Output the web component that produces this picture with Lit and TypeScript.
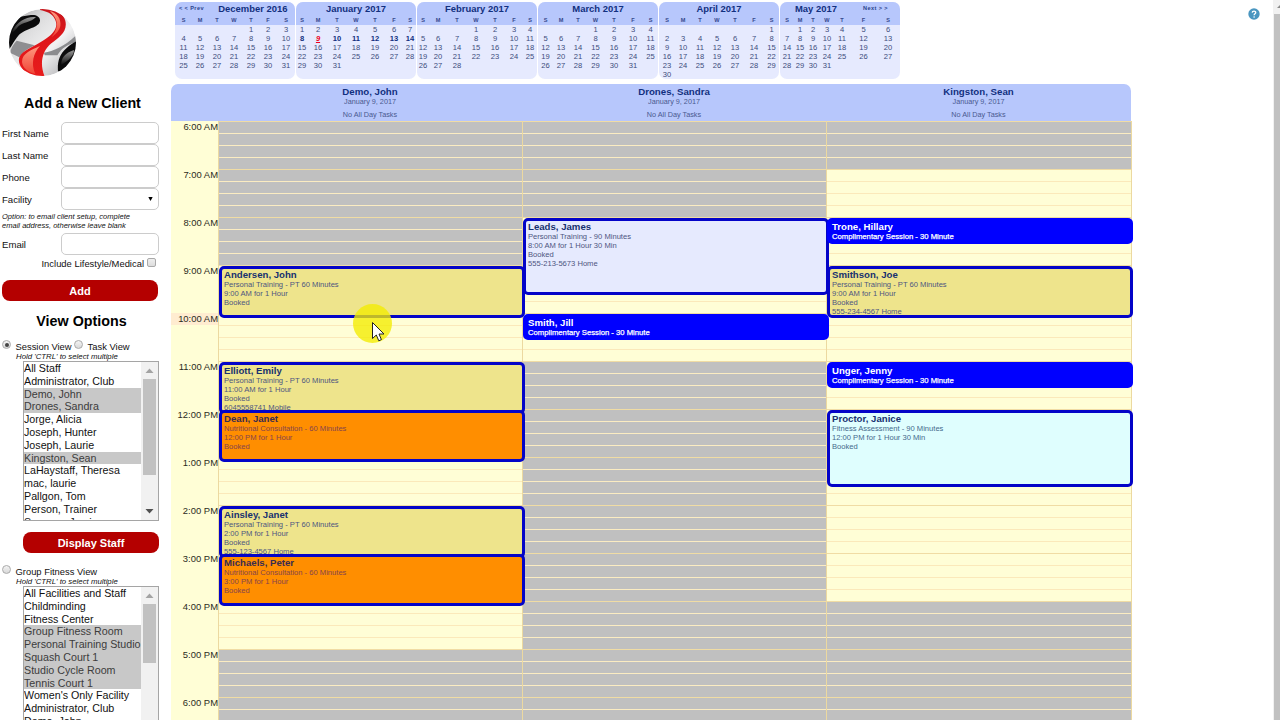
import { LitElement, html, css, svg, nothing } from "lit";
import { customElement, property } from "lit/decorators.js";
import { classMap } from "lit/directives/class-map.js";

interface Month {
  title: string;
  first: number;
  days: number;
  cols: number[];
  week?: [number, number];
  today?: number;
  prev?: boolean;
  next?: boolean;
}

interface Session {
  name: string;
  lines: string[];
  start: number;
  minutes: number;
  kind: string;
}

interface Staff {
  name: string;
  open: [number, number][];
  sessions: Session[];
}

const MONTHS: Month[] = [
  { title: "December 2016", first: 4, days: 31, cols: [17, 16, 18, 16, 18, 16, 20], prev: true },
  { title: "January 2017", first: 0, days: 31, cols: [12, 20, 18, 20, 18, 20, 12], week: [8, 14], today: 9 },
  { title: "February 2017", first: 3, days: 28, cols: [12, 18, 20, 18, 20, 18, 14] },
  { title: "March 2017", first: 3, days: 31, cols: [15, 16, 18, 17, 20, 18, 17] },
  { title: "April 2017", first: 6, days: 30, cols: [16, 16, 18, 16, 20, 18, 17] },
  { title: "May 2017", first: 1, days: 31, cols: [14, 12, 14, 14, 16, 27, 22], next: true },
];

const PT60 = "Personal Training - PT 60 Minutes";
const NUTRITION = "Nutritional Consultation - 60 Minutes";
const COMP = "Complimentary Session - 30 Minute";

const STAFF: Staff[] = [
  {
    name: "Demo, John",
    open: [[9, 17]],
    sessions: [
      { name: "Andersen, John", lines: [PT60, "9:00 AM for 1 Hour", "Booked"], start: 9, minutes: 60, kind: "pt" },
      { name: "Elliott, Emily", lines: [PT60, "11:00 AM for 1 Hour", "Booked", "6045558741 Mobile"], start: 11, minutes: 60, kind: "pt" },
      { name: "Dean, Janet", lines: [NUTRITION, "12:00 PM for 1 Hour", "Booked"], start: 12, minutes: 60, kind: "nutrition" },
      { name: "Ainsley, Janet", lines: [PT60, "2:00 PM for 1 Hour", "Booked", "555-123-4567 Home"], start: 14, minutes: 60, kind: "pt" },
      { name: "Michaels, Peter", lines: [NUTRITION, "3:00 PM for 1 Hour", "Booked"], start: 15, minutes: 60, kind: "nutrition" },
    ],
  },
  {
    name: "Drones, Sandra",
    open: [[8, 11]],
    sessions: [
      { name: "Leads, James", lines: ["Personal Training - 90 Minutes", "8:00 AM for 1 Hour 30 Min", "Booked", "555-213-5673 Home"], start: 8, minutes: 90, kind: "long" },
      { name: "Smith, Jill", lines: [COMP], start: 10, minutes: 30, kind: "comp" },
    ],
  },
  {
    name: "Kingston, Sean",
    open: [[7, 16]],
    sessions: [
      { name: "Trone, Hillary", lines: [COMP], start: 8, minutes: 30, kind: "comp" },
      { name: "Smithson, Joe", lines: [PT60, "9:00 AM for 1 Hour", "Booked", "555-234-4567 Home"], start: 9, minutes: 60, kind: "pt" },
      { name: "Unger, Jenny", lines: [COMP], start: 11, minutes: 30, kind: "comp" },
      { name: "Proctor, Janice", lines: ["Fitness Assessment - 90 Minutes", "12:00 PM for 1 Hour 30 Min", "Booked"], start: 12, minutes: 90, kind: "fitness" },
    ],
  },
];

const FIRST_HOUR = 6;
const HOURS = 13;
const HOUR_PX = 48;

const hourLabel = (h: number) => `${h > 12 ? h - 12 : h}:00 ${h < 12 ? "AM" : "PM"}`;

@customElement("month-card")
class MonthCard extends LitElement {
  @property({ attribute: false }) month!: Month;

  static styles = css`
    :host { display: block; width: 120px; height: 77px; overflow: hidden; border-radius: 7px; background: #e6eafe; color: #3c4c7c; }
    .head { height: 23px; background: #b7c7fc; }
    .title { display: flex; height: 13px; line-height: 13px; justify-content: center; font-size: 9.45px; font-weight: bold; color: #12307f; white-space: nowrap; }
    .title.prev { justify-content: space-between; padding: 0 7.5px 0 4px; }
    .title.next { justify-content: space-between; padding: 0 12px 0 15px; }
    .nav { font-size: 5.6px; letter-spacing: 0.4px; color: #2c448c; }
    .row { display: grid; text-align: center; }
    .week { font-size: 5.6px; font-weight: bold; line-height: 10px; color: #36498c; }
    .dates { font-size: 7.6px; line-height: 9px; grid-auto-rows: 9px; }
    .bold { font-weight: bold; color: #12307f; }
    .today { font-weight: bold; font-style: italic; color: #f00020; text-decoration: underline; }
  `;

  render() {
    const m = this.month;
    const columns = m.cols.map((c) => `${c}px`).join(" ");
    return html`
      <div class="head">
        <div class=${classMap({ title: true, prev: !!m.prev, next: !!m.next })}>
          ${m.prev ? html`<span class="nav">&lt; &lt; Prev</span>` : nothing}
          <span>${m.title}</span>
          ${m.next ? html`<span class="nav">Next &gt; &gt;</span>` : nothing}
        </div>
        <div class="row week" style="grid-template-columns:${columns}">
          ${[..."SMTWTFS"].map((d) => html`<span>${d}</span>`)}
        </div>
      </div>
      <div class="row dates" style="grid-template-columns:${columns}">
        ${Array.from({ length: m.first }, () => html`<span></span>`)}
        ${Array.from({ length: m.days }, (_, i) => i + 1).map(
          (d) => html`<span class=${classMap({
            bold: !!m.week && d >= m.week[0] && d <= m.week[1] && d !== m.today,
            today: d === m.today,
          })}>${d}</span>`
        )}
      </div>
    `;
  }
}

@customElement("list-box")
class ListBox extends LitElement {
  @property({ attribute: false }) items: string[] = [];
  @property({ attribute: false }) selected: string[] = [];
  @property({ type: Number }) thumb = 96;

  static styles = css`
    :host { display: flex; box-sizing: border-box; width: 136px; height: 160px; border: 1px solid #a5a5a5; background: #fff; overflow: hidden; }
    .options { width: 117px; overflow: hidden; }
    .option { height: 12.8px; line-height: 12.5px; font-size: 10.7px; white-space: nowrap; color: #111; }
    .on { background: #c8c8c8; color: #3c3c3c; }
    .bar { display: flex; flex-direction: column; width: 17px; background: #f1f1f1; }
    .arrow { flex: none; width: 17px; height: 17px; fill: #a3a3a3; }
    .down { fill: #505050; }
    .thumb { flex: none; width: 13px; margin-left: 2px; background: #c1c1c1; }
    .space { flex: 1; }
  `;

  render() {
    return html`
      <div class="options">
        ${this.items.map((t) => html`<div class=${classMap({ option: true, on: this.selected.includes(t) })}>${t}</div>`)}
      </div>
      <div class="bar">
        <svg class="arrow" viewBox="0 0 17 17"><path d="M4.500 11h8L8.500 6.500z" /></svg>
        <div class="thumb" style="height:${this.thumb}px"></div>
        <div class="space"></div>
        <svg class="arrow down" viewBox="0 0 17 17"><path d="M4.500 6h8L8.500 10.500z" /></svg>
      </div>
    `;
  }
}

@customElement("day-board")
class DayBoard extends LitElement {
  static styles = css`
    :host { display: block; width: 961px; }
    .head { display: grid; grid-template-columns: 47px 304px 304px 305px; box-sizing: border-box; width: 960px; height: 37px; padding-top: 2px; border-radius: 7px 7px 0 0; background: #b7c7fc; text-align: center; }
    .name { font-size: 9.7px; line-height: 12px; font-weight: bold; color: #12307f; }
    .small { font-size: 7.25px; line-height: 8px; color: #4a5a90; }
    .small.tasks { margin-top: 5px; }
    .body { display: grid; grid-template-columns: 47px 304px 304px 306px; }
    .times { background: #fffed6; }
    .hour { height: 48px; font-size: 9.45px; line-height: 11px; text-align: right; color: #2b2b22; white-space: nowrap; }
    .hour span { display: block; height: 12px; }
    .hour .now { background: #ffecd0; }
    .column { position: relative; border-left: 1px solid #ecd9a0; }
    .column:last-child { border-right: 1px solid #ecd9a0; }
    .slot { box-sizing: border-box; height: 12px; border-top: 1px solid #fbe9ba; background: #fffed6; }
    .slot.closed { background: #c0c0c0; border-top-color: #fbecc2; }
    .slot.full { border-top-color: #f0dca4; }
    .session { position: absolute; left: 0; z-index: 1; box-sizing: border-box; width: 306px; overflow: hidden; border: 3px solid #0404c8; border-radius: 5px; padding: 0 2px; color: #4d5580; white-space: nowrap; }
    .session .who { height: 10.5px; font-size: 9.65px; line-height: 12px; font-weight: bold; color: #17316f; }
    .session .line { font-size: 7.6px; line-height: 9px; }
    .pt { background: #eee48c; }
    .nutrition { background: #ff8e00; color: #85434e; }
    .nutrition .who { color: #3a2c50; }
    .long { background: #e6eafe; }
    .fitness { background: #dffefe; color: #456a8c; }
    .comp { background: #00f; border-color: #00f; color: #fff; }
    .comp .who { color: #fff; }
    .comp .line { font-size: 7.7px; -webkit-text-stroke: 0.25px #fff; }
  `;

  render() {
    const hours = Array.from({ length: HOURS }, (_, i) => FIRST_HOUR + i);
    return html`
      <div class="head">
        <div></div>
        ${STAFF.map((s) => html`<div>
          <div class="name">${s.name}</div>
          <div class="small">January 9, 2017</div>
          <div class="small tasks">No All Day Tasks</div>
        </div>`)}
      </div>
      <div class="body">
        <div class="times">
          ${hours.map((h) => html`<div class="hour"><span class=${classMap({ now: h === 10 })}>${hourLabel(h)}</span></div>`)}
        </div>
        ${STAFF.map((s) => html`<div class="column">
          ${hours.flatMap((h) => [0, 1, 2, 3].map((q) => {
            const open = s.open.some(([a, b]) => h >= a && h < b);
            return html`<div class=${classMap({ slot: true, closed: !open, full: q === 0 })}></div>`;
          }))}
          ${s.sessions.map((e) => html`<div class="session ${e.kind}"
            style="top:${(e.start - FIRST_HOUR) * HOUR_PX + 1}px;height:${Math.round(e.minutes * 0.8 * 1.075)}px">
            <div class="who">${e.name}</div>
            ${e.lines.map((l) => html`<div class="line">${l}</div>`)}
          </div>`)}
        </div>`)}
      </div>
    `;
  }
}

const logo = svg`
  <defs>
    <clipPath id="ball"><circle cx="127.500" cy="127.500" r="100.500" /></clipPath>
    <linearGradient id="silver" x1="0" y1="0" x2="1" y2="1">
      <stop offset="0" stop-color="#a8a8aa" /><stop offset=".3" stop-color="#dcdcdd" />
      <stop offset=".6" stop-color="#f2f2f3" /><stop offset="1" stop-color="#a5a5a8" />
    </linearGradient>
    <linearGradient id="red" x1="0" y1="0" x2="0" y2="1">
      <stop offset="0" stop-color="#c8161c" /><stop offset=".5" stop-color="#e0161a" /><stop offset="1" stop-color="#e81c1c" />
    </linearGradient>
    <linearGradient id="glow" x1="0" y1="0" x2="0" y2="1">
      <stop offset="0" stop-color="#ff9a80" /><stop offset="1" stop-color="#f04436" />
    </linearGradient>
    <linearGradient id="shine" x1="0" y1="0" x2="0" y2="1">
      <stop offset="0" stop-color="#999" /><stop offset="1" stop-color="#111" />
    </linearGradient>
  </defs>
  <g clip-path="url(#ball)">
    <circle cx="127.500" cy="127.500" r="100.500" fill="url(#silver)" />
    <path d="M50 122 L104 136 C84 146 70 154 58 172 L30 158 C32 146 40 132 50 122Z" fill="#8e8e91" />
    <path d="M132 158 C160 154 192 140 226 108 L230 126 C206 132 186 142 172 166 L134 166Z" fill="#8b8c8f" />
    <path d="M22 152 C36 142 40 124 56 106 C76 84 118 84 120 62 C121 48 104 42 88 46 L60 50 L20 96Z" fill="#0b0b0c" />
    <path d="M38 90 C52 66 78 48 108 51 C94 68 66 66 54 80 C48 88 42 94 36 98Z" fill="url(#shine)" />
    <path d="M174 214 C172 190 176 164 200 144 C210 134 222 128 232 122 L232 180 L196 216Z" fill="#0b0b0c" />
    <path d="M184 194 C182 176 196 158 222 150 C222 166 208 180 184 194Z" fill="url(#shine)" />
    <path d="M120 24 C150 24 188 34 196 62 C204 96 176 112 154 130 C126 154 118 190 134 230 L88 226 C66 210 52 190 58 172 C66 150 104 140 132 120 C160 102 178 82 164 56 C156 40 140 34 120 30Z" fill="url(#red)" />
    <path d="M148 32 C172 38 184 56 181 78 C178 92 166 104 154 112 C172 90 176 68 162 48 C158 42 154 36 148 32Z" fill="url(#glow)" />
    <path d="M66 186 C66 158 96 150 120 138 C100 160 92 190 106 222 C84 216 68 204 66 186Z" fill="url(#glow)" />
  </g>
`;

@customElement("app-root")
class AppRoot extends LitElement {
  static styles = css`
    :host { display: flex; position: relative; width: 1280px; height: 720px; overflow: hidden; background: #fff; font-family: "Liberation Sans", Arial, sans-serif; color: #111; }
    .side { flex: none; width: 171px; height: 720px; overflow: hidden; }
    .logo { display: block; width: 67px; height: 67px; margin: 9px 0 0 9px; }
    .h { font-size: 14.3px; font-weight: bold; line-height: 18px; text-align: center; width: 165px; margin: 0; color: #000; }
    .h.add { margin-top: 18px; }
    .h.view { margin-top: 11px; width: 163px; }
    .form { padding: 10px 0 0 2px; }
    .field { display: flex; align-items: center; height: 22px; width: 157px; font-size: 9.6px; }
    .field label { width: 59px; padding-top: 1px; }
    .box { display: flex; align-items: center; justify-content: flex-end; box-sizing: border-box; flex: 1; height: 22px; border: 1px solid #ccc; border-radius: 5px; background: #fff; }
    .box svg { width: 5px; height: 4px; margin-right: 5px; }
    .note { font-size: 7.55px; font-style: italic; line-height: 9px; white-space: nowrap; height: 21px; padding-top: 2px; }
    .check { display: flex; align-items: center; gap: 3px; height: 17px; padding-left: 39.500px; font-size: 9.42px; white-space: nowrap; }
    .tick { box-sizing: border-box; width: 9px; height: 9px; margin-bottom: 3px; border: 1px solid #a9a9a9; border-radius: 2px; background: linear-gradient(#eee, #ddd); }
    .btn { display: flex; align-items: center; justify-content: center; width: 156px; height: 21px; margin: 8px 0 0 2px; border-radius: 8px; background: #b40000; color: #fff; font-size: 11px; font-weight: bold; }
    .btn.staff { width: 136px; margin: 11px 0 0 23px; }
    .radios { display: flex; align-items: center; height: 11px; padding-left: 2px; font-size: 9.4px; white-space: nowrap; }
    .radios.first { margin-top: 11px; }
    .radios.group { margin-top: 13px; }
    .radio { display: flex; box-sizing: border-box; flex: none; align-items: center; justify-content: center; width: 9px; height: 9px; margin: 0 4.500px 4px 0; border: 1px solid #aaa; border-radius: 50%; background: linear-gradient(#f4f4f4, #d8d8d8); }
    .dot { width: 4px; height: 4px; border-radius: 50%; background: #444; }
    .radios span + .radio { margin-left: 2.500px; }
    .hold { font-size: 7.8px; font-style: italic; line-height: 9px; padding-left: 16px; white-space: nowrap; height: 9px; }
    list-box { margin-left: 23px; }
    .main { flex: none; width: 961px; }
    .months { display: flex; gap: 1px; padding: 2px 0 5px 4px; }
    .right { flex: 1; display: flex; justify-content: flex-end; gap: 13px; }
    .help { width: 12px; height: 12px; margin-top: 8px; }
    .scroll { width: 7px; background: #f1f1f1; }
    .scroll svg { display: block; width: 7px; height: 14px; }
    .track { height: 706px; margin-left: 1px; background: #c1c1c1; }
    .pointer { position: absolute; left: 352px; top: 303px; z-index: 5; width: 41px; height: 41px; }
  `;

  render() {
    return html`
      <div class="side">
        <svg class="logo" viewBox="27 27 201 201">${logo}</svg>
        <h2 class="h add">Add a New Client</h2>
        <div class="form">
          ${["First Name", "Last Name", "Phone"].map((l) => html`<div class="field"><label>${l}</label><div class="box"></div></div>`)}
          <div class="field"><label>Facility</label><div class="box"><svg viewBox="0 0 5 4"><path d="M.3 0h4.400L2.500 4z" /></svg></div></div>
          <div class="note">Option: to email client setup, complete<br />email address, otherwise leave blank</div>
          <div class="field"><label>Email</label><div class="box"></div></div>
          <div class="check">Include Lifestyle/Medical<div class="tick"></div></div>
        </div>
        <div class="btn">Add</div>
        <h2 class="h view">View Options</h2>
        <div class="radios first">
          <div class="radio"><div class="dot"></div></div><span>Session View</span>
          <div class="radio"></div><span>Task View</span>
        </div>
        <div class="hold">Hold 'CTRL' to select multiple</div>
        <list-box .items=${["All Staff", "Administrator, Club", "Demo, John", "Drones, Sandra", "Jorge, Alicia", "Joseph, Hunter", "Joseph, Laurie", "Kingston, Sean", "LaHaystaff, Theresa", "mac, laurie", "Pallgon, Tom", "Person, Trainer", "Sarsons, Jamie"]}
          .selected=${["Demo, John", "Drones, Sandra", "Kingston, Sean"]} .thumb=${96}></list-box>
        <div class="btn staff">Display Staff</div>
        <div class="radios group"><div class="radio"></div><span>Group Fitness View</span></div>
        <div class="hold">Hold 'CTRL' to select multiple</div>
        <list-box .items=${["All Facilities and Staff", "Childminding", "Fitness Center", "Group Fitness Room", "Personal Training Studio", "Squash Court 1", "Studio Cycle Room", "Tennis Court 1", "Women's Only Facility", "Administrator, Club", "Demo, John"]}
          .selected=${["Group Fitness Room", "Personal Training Studio", "Squash Court 1", "Studio Cycle Room", "Tennis Court 1"]} .thumb=${59}></list-box>
      </div>
      <div class="main">
        <div class="months">${MONTHS.map((m) => html`<month-card .month=${m}></month-card>`)}</div>
        <day-board></day-board>
      </div>
      <div class="right">
        <svg class="help" viewBox="0 0 12 12">
          <circle cx="6" cy="6" r="5.700" fill="#4a96c0" />
          <path d="M4.200 4.600C4.300 2.500 7.900 2.600 7.700 4.600C7.600 5.700 6.100 5.700 6.100 7.200" fill="none" stroke="#fff" stroke-width="1.300" />
          <circle cx="6.100" cy="9" r=".8" fill="#fff" />
        </svg>
        <div class="scroll">
          <svg viewBox="0 0 7 14"><path d="M4 8h3V5z" fill="#8a8a8a" /></svg>
          <div class="track"></div>
        </div>
      </div>
      <svg class="pointer" viewBox="0 0 41 41">
        <circle cx="20.500" cy="20.500" r="19.500" fill="#f4ec00" fill-opacity=".78" />
        <path d="M20.500 19.500V35.500L24.300 32L26.800 37.800L29.400 36.600L27 31H32Z" fill="#fff" stroke="#222" stroke-width="1" />
      </svg>
    `;
  }
}
